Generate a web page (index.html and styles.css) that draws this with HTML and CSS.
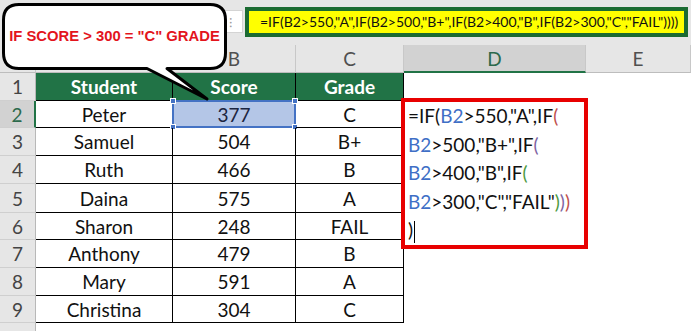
FILE: index.html
```html
<!DOCTYPE html>
<html>
<head>
<meta charset="utf-8">
<link rel="stylesheet" href="styles.css">
</head>
<body>
<div class="sheet">
  <div class="fbar">
    <div class="fx"><span class="fx-mark">⁝</span></div>
    <div class="formula">=IF(B2&gt;550,"A",IF(B2&gt;500,"B+",IF(B2&gt;400,"B",IF(B2&gt;300,"C","FAIL"))))</div>
  </div>
  <div class="grid">
    <div class="corner"></div><div class="ch">A</div><div class="ch">B</div><div class="ch">C</div><div class="ch ch-sel">D</div><div class="ch">E</div>

    <div class="rh">1</div><div class="c hd">Student</div><div class="c hd">Score</div><div class="c hd">Grade</div><div class="e"></div><div class="e"></div>
    <div class="rh rh-sel">2</div><div class="c">Peter</div><div class="c sel">377<span class="frame"><i class="h tl"></i><i class="h tr"></i><i class="h bl"></i><i class="h br"></i></span></div><div class="c">C</div><div class="e"></div><div class="e"></div>
    <div class="rh">3</div><div class="c">Samuel</div><div class="c">504</div><div class="c">B+</div><div class="e"></div><div class="e"></div>
    <div class="rh">4</div><div class="c">Ruth</div><div class="c">466</div><div class="c">B</div><div class="e"></div><div class="e"></div>
    <div class="rh">5</div><div class="c">Daina</div><div class="c">575</div><div class="c">A</div><div class="e"></div><div class="e"></div>
    <div class="rh">6</div><div class="c">Sharon</div><div class="c">248</div><div class="c">FAIL</div><div class="e"></div><div class="e"></div>
    <div class="rh">7</div><div class="c">Anthony</div><div class="c">479</div><div class="c">B</div><div class="e"></div><div class="e"></div>
    <div class="rh">8</div><div class="c">Mary</div><div class="c">591</div><div class="c">A</div><div class="e"></div><div class="e"></div>
    <div class="rh">9</div><div class="c">Christina</div><div class="c">304</div><div class="c">C</div><div class="e"></div><div class="e"></div>
    <div class="rh"></div><div class="e"></div><div class="e"></div><div class="e"></div><div class="e"></div><div class="e"></div>
  </div>

  <svg class="callout" width="240" height="106" viewBox="0 0 240 106">
    <path d="M19 4.5 H210 Q225.5 4.5 225.5 20 V53 Q225.5 68.5 210 68.5 H167 L207 99 L147 68.5 H19 Q3.5 68.5 3.5 53 V20 Q3.5 4.5 19 4.5 Z" fill="#fff" stroke="#000" stroke-width="3" stroke-linejoin="round"/>
  </svg>
  <div class="callout-text">IF SCORE &gt; 300 = "C" GRADE</div>

  <div class="editor">
    <div class="ln">=IF(<span class="ref">B2</span>&gt;550,"A",IF<span class="p1">(</span></div>
    <div class="ln"><span class="ref">B2</span>&gt;500,"B+",IF<span class="p2">(</span></div>
    <div class="ln"><span class="ref">B2</span>&gt;400,"B",IF<span class="p3">(</span></div>
    <div class="ln"><span class="ref">B2</span>&gt;300,"C","FAIL"<span class="p3">)</span><span class="p2">)</span><span class="p1">)</span></div>
    <div class="ln">)<span class="caret"></span></div>
  </div>
</div>
</body>
</html>
```

FILE: styles.css
```css
* { box-sizing: border-box; }
html, body { margin: 0; padding: 0; }
body { width: 691px; height: 331px; overflow: hidden; background: #fff; font-family: Lato, "Open Sans", sans-serif; }

.sheet { position: relative; width: 691px; height: 331px; overflow: hidden; background: #e6e6e6; }

.fbar { height: 45px; display: flex; align-items: flex-start; padding-top: 7px; padding-left: 185px; }
.fx { width: 58px; height: 23px; margin-top: 3px; background: #fff; border: 1px solid #d4d4d4; display: flex; align-items: center; justify-content: flex-end; padding-right: 10px; }
.fx-mark { color: #9a9a9a; font-size: 13px; }
.formula { margin-left: 2px; width: 443px; height: 30px; background: #ffff00; border: 4px solid #1b6b32; font-size: 14px; line-height: 22px; color: #111; padding-left: 11px; white-space: nowrap; }

.grid { display: grid; grid-template-columns: 36px 137px 123px 108px 182px 105px; grid-template-rows: 28px 28px 27px 28px 28px 29px 27px 28px 28px 27px 20px; background: #fff; }

.corner { background: #e6e6e6; border-right: 1px solid #c8c8c8; border-bottom: 1px solid #bdbdbd; }
.ch { background: #e6e6e6; border-right: 1px solid #c8c8c8; border-bottom: 1px solid #bdbdbd; color: #505050; font-size: 19px; display: flex; align-items: center; justify-content: center; }
.ch-sel { background: #d2d2d2; color: #2c6a4c; border-bottom: 2px solid #217346; }

.rh { background: #e6e6e6; border-right: 1px solid #b8b8b8; border-bottom: 1px solid #cfcfcf; color: #444; font-size: 19px; display: flex; align-items: center; justify-content: center; }
.rh-sel { background: #d2d2d2; color: #2c6a4c; border-right: 2px solid #217346; }

.c { border-right: 1px solid #000; border-bottom: 1px solid #000; font-size: 19px; color: #111; display: flex; align-items: center; justify-content: center; position: relative; }
.hd { background: #217346; color: #fff; font-weight: 700; }
.sel { background: #b4c6e7; color: #1c2540; }
.e { background: #fff; }

.frame { position: absolute; left: -1px; top: -1px; right: -1px; bottom: -1px; border: 2px solid #4472c4; }
.h { position: absolute; width: 6px; height: 6px; background: #4472c4; border: 1px solid #fff; }
.tl { left: -4px; top: -4px; }
.tr { right: -4px; top: -4px; }
.bl { left: -4px; bottom: -4px; }
.br { right: -4px; bottom: -4px; }

.callout { position: absolute; left: 0; top: 0; }
.callout-text { position: absolute; left: 3px; top: 4px; width: 223px; height: 63px; display: flex; align-items: center; justify-content: center; font-family: "Liberation Sans", Arial, sans-serif; font-weight: 700; font-size: 14.8px; color: #e3141c; }

.editor { position: absolute; left: 401px; top: 98px; width: 187px; height: 151px; border: 4px solid #e80000; background: #fff; padding: 0 0 0 3px; }
.ln { height: 28.5px; line-height: 28px; font-size: 19px; color: #111; white-space: nowrap; }
.ref { color: #3f6fc6; }
.p1 { color: #c0504d; }
.p2 { color: #8064a2; }
.p3 { color: #4f9a3f; }
.caret { display: inline-block; width: 1px; height: 22px; background: #000; vertical-align: middle; margin-left: 1px; }
```
